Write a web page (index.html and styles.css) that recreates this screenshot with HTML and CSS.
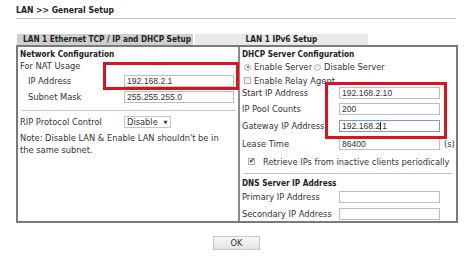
FILE: index.html
```html
<!DOCTYPE html>
<html>
<head>
<meta charset="utf-8">
<link rel="stylesheet" href="styles.css">
</head>
<body>
<div class="page">
  <div class="title">LAN &gt;&gt; General Setup</div>
  <div class="rule"></div>
  <div class="tabs">
    <div class="tab active">LAN 1 Ethernet TCP / IP and DHCP Setup</div>
    <div class="tab">LAN 1 IPv6 Setup</div>
  </div>
  <div class="box">
    <div class="col left">
      <div class="head">Network Configuration</div>
      <div class="row r-nat">For NAT Usage</div>
      <div class="row r-ip"><span class="lbl ind">IP Address</span><span class="field wide">192.168.2.1</span></div>
      <div class="row r-mask"><span class="lbl ind">Subnet Mask</span><span class="field wide">255.255.255.0</span></div>
      <div class="sep"></div>
      <div class="row r-rip"><span class="lbl">RIP Protocol Control</span><span class="select">Disable <span class="arrow">▼</span></span></div>
      <div class="note">Note: Disable LAN &amp; Enable LAN shouldn't be in the same subnet.</div>
      <div class="mark mark-left"></div>
    </div>
    <div class="col right">
      <div class="head">DHCP Server Configuration</div>
      <div class="row r-radio"><span class="radio on"></span>Enable Server <span class="radio"></span>Disable Server</div>
      <div class="row r-relay"><span class="check"></span>Enable Relay Agent</div>
      <div class="row r-start"><span class="lbl2">Start IP Address</span><span class="field">192.168.2.10</span></div>
      <div class="row r-pool"><span class="lbl2">IP Pool Counts</span><span class="field">200</span></div>
      <div class="row r-gw"><span class="lbl2">Gateway IP Address</span><span class="field focus">192.168.2<span class="caret"></span>1</span></div>
      <div class="row r-lease"><span class="lbl2">Lease Time</span><span class="field">86400</span><span class="unit">(s)</span></div>
      <div class="row r-ret"><span class="check on">✔</span>Retrieve IPs from inactive clients periodically</div>
      <div class="sep"></div>
      <div class="head h-dns">DNS Server IP Address</div>
      <div class="row r-pri"><span class="lbl2">Primary IP Address</span><span class="field"></span></div>
      <div class="row r-sec"><span class="lbl2">Secondary IP Address</span><span class="field"></span></div>
      <div class="mark mark-right"></div>
    </div>
  </div>
  <div class="actions"><button class="ok">OK</button></div>
</div>
</body>
</html>
```
FILE: styles.css
```css
html, body { margin: 0; padding: 0; background: #fff; }
body { font-family: "DejaVu Sans", Verdana, sans-serif; font-size: 8.3px; color: #333; }
.page { width: 474px; height: 261px; overflow: hidden; }
.title { font-family: "DejaVu Sans Condensed", "DejaVu Sans", sans-serif; font-weight: bold; font-size: 8.6px; color: #222; padding: 4px 0 0 16px; height: 12px; line-height: 12px; }
.rule { margin: 2px 18px 0 16px; border-top: 1px solid #c8c8c8; }
.tabs { display: flex; margin: 15px 0 0 17px; height: 11px; }
.tab { font-family: "DejaVu Sans Condensed", "DejaVu Sans", sans-serif; font-weight: bold; font-size: 8.2px; line-height: 11px; color: #222; background: #e9e9e9; width: 173px; text-align: center; margin-right: 2px; }
.tab.active { background: #cfcfcf; width: 176px; text-align: left; padding-left: 6px; box-sizing: border-box; }
.box { margin-left: 16px; width: 442px; height: 178px; box-sizing: border-box; border: 2px solid #7a7a7a; display: flex; }
.col { position: relative; }
.left { width: 218px; border-right: 2px solid #8a8a8a; padding-left: 2px; }
.right { flex: 1; padding-left: 2px; }
.head { font-family: "DejaVu Sans Condensed", "DejaVu Sans", sans-serif; font-weight: bold; font-size: 8.2px; color: #222; height: 12px; line-height: 12px; margin-top: 1px; }
.row { display: flex; align-items: center; white-space: nowrap; }
.r-nat { height: 12px; }
.r-ip { height: 16px; margin-top: 1px; }
.r-mask { height: 16px; }
.lbl { width: 104px; }
.lbl.ind { padding-left: 8px; width: 96px; }
.lbl2 { width: 97px; }
.field { display: inline-block; box-sizing: border-box; height: 12px; width: 101px; border: 1px solid #bdbdbd; background: #fff; font-family: "Liberation Sans", Arial, sans-serif; font-size: 8.6px; line-height: 10px; padding-left: 2px; color: #333; }
.field.wide { width: 110px; }
.field.focus { border-color: #6f9bd6; }
.caret { display: inline-block; width: 1px; height: 8px; background: #222; vertical-align: -1px; margin: 0 1px 0 0; }
.sep { height: 0; border-top: 1px solid #c8c8c8; margin: 5px 2px 0 1px; }
.left .sep { margin-top: 5px; }
.r-rip { height: 16px; margin-top: 3px; }
.select { display: inline-block; box-sizing: border-box; height: 12px; width: 47px; border: 1px solid #c4c4c4; padding-left: 2px; line-height: 10px; font-size: 8.3px; }
.arrow { font-size: 5px; margin-left: 3px; vertical-align: 1px; }
.note { line-height: 12px; margin-top: 2px; padding-right: 6px; }
.r-radio { height: 14px; }
.r-relay { height: 13px; }
.radio { display: inline-block; width: 7px; height: 7px; border-radius: 50%; border: 1px solid #b0b0b0; background: #f0f0f0; margin: 0 3px 0 2px; box-sizing: border-box; position: relative; }
.radio.on::after { content: ""; position: absolute; left: 1.5px; top: 1.5px; width: 2px; height: 2px; border-radius: 50%; background: #555; }
.check { display: inline-block; width: 7px; height: 7px; border: 1px solid #b0b0b0; background: #f2f2f2; margin: 0 3px 0 2px; box-sizing: border-box; font-size: 7px; line-height: 5px; text-align: center; color: #333; overflow: visible; }
.check.on { margin-left: 6px; margin-right: 8px; }
.r-start { height: 16px; margin-top: -2px; }
.r-pool { height: 16px; }
.r-gw { height: 17px; }
.r-lease { height: 17px; margin-top: 1px; }
.unit { margin-left: 4px; }
.r-ret { height: 17px; margin-top: 1px; }
.right .sep { margin-top: 3px; margin-right: 3px; }
.h-dns { margin-top: 3px; }
.r-pri { height: 16px; }
.r-sec { height: 17px; }
.mark { position: absolute; border: 3px solid #d8141e; box-sizing: border-box; }
.mark-left { left: 85px; top: 15px; width: 136px; height: 28px; }
.mark-right { left: 85px; top: 35px; width: 122px; height: 57px; }
.actions { display: flex; justify-content: center; margin-top: 13px; padding-right: 0; }
.ok { margin-left: -1px; width: 47px; height: 14px; box-sizing: border-box; border: 1px solid #c8c8c8; background: linear-gradient(#f8f8f8, #e4e4e4); font-family: "DejaVu Sans", sans-serif; font-size: 8.3px; color: #333; padding: 0; line-height: 12px; }
```
